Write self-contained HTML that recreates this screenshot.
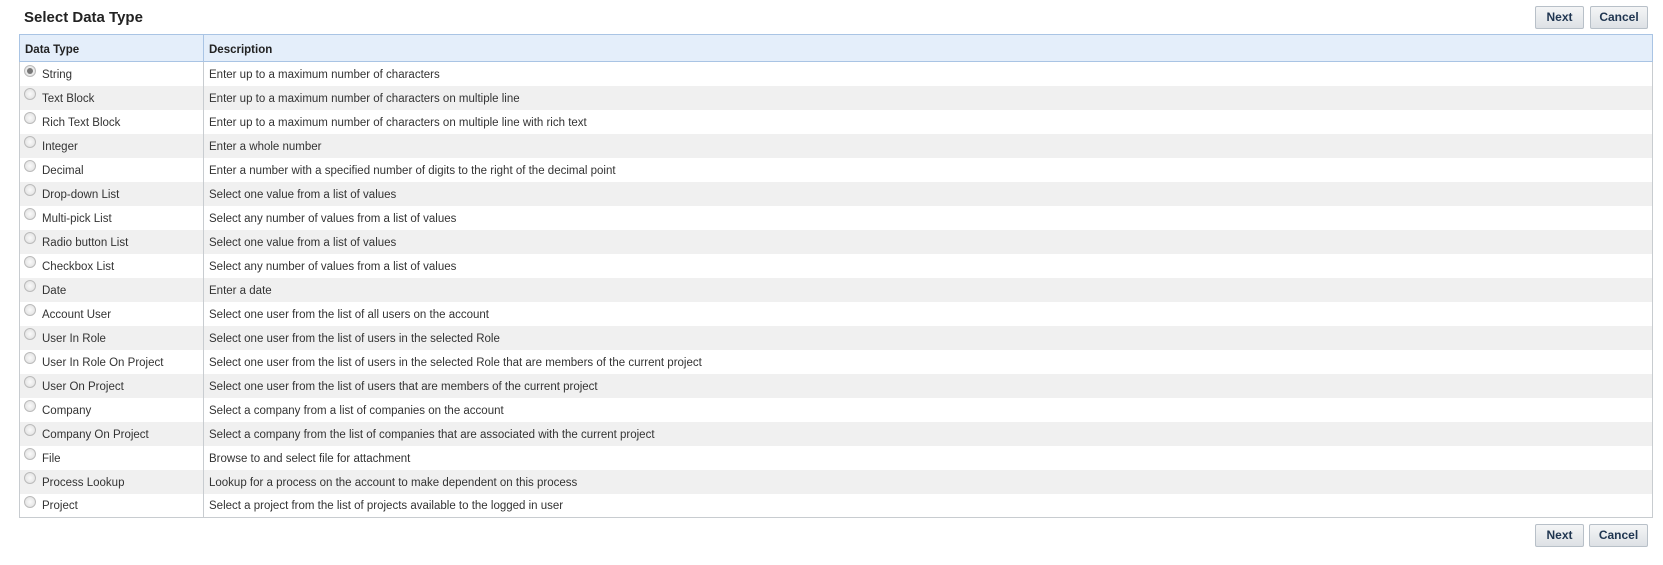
<!DOCTYPE html>
<html><head><meta charset="utf-8"><style>
*{box-sizing:border-box}
body{margin:0;width:1663px;height:565px;background:#fff;font-family:"Liberation Sans",sans-serif;color:#333;position:relative;overflow:hidden}
h1{position:absolute;left:24px;top:9px;margin:0;font-size:15px;font-weight:bold;color:#222}
.btn{position:absolute;height:23px;border:1px solid #b8c0c8;border-radius:2px;background:linear-gradient(#f4f5f6,#dde1e5);font-size:12px;font-weight:bold;color:#1f3550;text-align:center;line-height:21px}
table{position:absolute;left:19px;top:34px;width:1634px;border-collapse:collapse;border:1px solid #c8ccd0;font-size:11.5px}
th{background:#e4eefa;border:1px solid #a9c4e4;height:27px;text-align:left;padding:3px 5px 0;font-weight:bold;color:#222;vertical-align:middle}
td{height:24px;padding:2px 5px 0;border-right:1px solid #c8ccd0;color:#333;vertical-align:middle;line-height:14px}
tr:nth-child(odd) td{background:#f0f0f0}
td:first-child{width:184px;padding-left:4px}
.r{display:inline-block;width:12px;height:12px;border-radius:50%;border:1px solid #bbb;background:radial-gradient(#fafafa,#ddd);vertical-align:middle;margin-right:6px;position:relative;top:-4px}
.r.on::after{content:"";position:absolute;left:2px;top:2px;width:6px;height:6px;border-radius:50%;background:#777}
</style></head><body>
<h1>Select Data Type</h1>
<div class="btn" style="left:1535px;top:6px;width:49px">Next</div>
<div class="btn" style="left:1590px;top:6px;width:58px">Cancel</div>
<table>
<tr><th>Data Type</th><th>Description</th></tr>
<tr><td><span class="r on"></span>String</td><td>Enter up to a maximum number of characters</td></tr>
<tr><td><span class="r"></span>Text Block</td><td>Enter up to a maximum number of characters on multiple line</td></tr>
<tr><td><span class="r"></span>Rich Text Block</td><td>Enter up to a maximum number of characters on multiple line with rich text</td></tr>
<tr><td><span class="r"></span>Integer</td><td>Enter a whole number</td></tr>
<tr><td><span class="r"></span>Decimal</td><td>Enter a number with a specified number of digits to the right of the decimal point</td></tr>
<tr><td><span class="r"></span>Drop-down List</td><td>Select one value from a list of values</td></tr>
<tr><td><span class="r"></span>Multi-pick List</td><td>Select any number of values from a list of values</td></tr>
<tr><td><span class="r"></span>Radio button List</td><td>Select one value from a list of values</td></tr>
<tr><td><span class="r"></span>Checkbox List</td><td>Select any number of values from a list of values</td></tr>
<tr><td><span class="r"></span>Date</td><td>Enter a date</td></tr>
<tr><td><span class="r"></span>Account User</td><td>Select one user from the list of all users on the account</td></tr>
<tr><td><span class="r"></span>User In Role</td><td>Select one user from the list of users in the selected Role</td></tr>
<tr><td><span class="r"></span>User In Role On Project</td><td>Select one user from the list of users in the selected Role that are members of the current project</td></tr>
<tr><td><span class="r"></span>User On Project</td><td>Select one user from the list of users that are members of the current project</td></tr>
<tr><td><span class="r"></span>Company</td><td>Select a company from a list of companies on the account</td></tr>
<tr><td><span class="r"></span>Company On Project</td><td>Select a company from the list of companies that are associated with the current project</td></tr>
<tr><td><span class="r"></span>File</td><td>Browse to and select file for attachment</td></tr>
<tr><td><span class="r"></span>Process Lookup</td><td>Lookup for a process on the account to make dependent on this process</td></tr>
<tr><td><span class="r"></span>Project</td><td>Select a project from the list of projects available to the logged in user</td></tr>
</table>
<div class="btn" style="left:1535px;top:524px;width:49px">Next</div>
<div class="btn" style="left:1589px;top:524px;width:59px">Cancel</div>
</body></html>
